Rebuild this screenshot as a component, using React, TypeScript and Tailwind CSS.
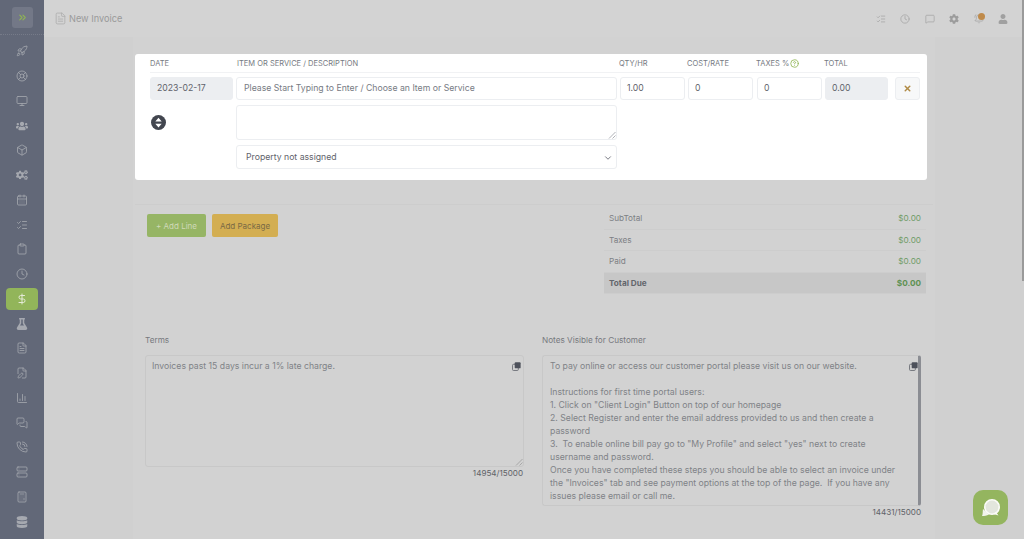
import {
  BellRing, Box, Calculator, CalendarDays, ChartColumn, ChevronDown, Clipboard, Clock, DollarSign,
  FilePen, FileText, LifeBuoy, ListChecks, MessageSquare, MessagesSquare, Monitor, PhoneCall, Rocket,
  Server, X, ChevronsRight, CircleHelp,
} from 'lucide-react'
import { FaCog, FaCogs, FaDatabase, FaFlask, FaUser, FaUsers } from 'react-icons/fa'
import type { ComponentType } from 'react'

const font = { fontFamily: 'Inter, "Liberation Sans", sans-serif' }

type IconType = ComponentType<{ className?: string; strokeWidth?: number }>

const navTop: IconType[] = [Rocket, LifeBuoy, Monitor, FaUsers, Box, FaCogs, CalendarDays, ListChecks, Clipboard, Clock]
const navBottom: IconType[] = [FaFlask, FileText, FilePen, ChartColumn, MessagesSquare, PhoneCall, Server, Calculator, FaDatabase]

const notes = `To pay online or access our customer portal please visit us on our website.

Instructions for first time portal users:
1. Click on "Client Login" Button on top of our homepage
2. Select Register and enter the email address provided to us and then create a password
3.  To enable online bill pay go to "My Profile" and select "yes" next to create username and password.
Once you have completed these steps you should be able to select an invoice under the "Invoices" tab and see payment options at the top of the page.  If you have any issues please email or call me.`

function NavIcon({ icon: Icon }: { icon: IconType }) {
  return (
    <div className="flex h-[24.75px] w-full items-center justify-center">
      <Icon className="h-[12px] w-[12px] text-[#a6a9b0]" strokeWidth={1.6} />
    </div>
  )
}

function Field({ children, className = 'bg-white' }: { children: React.ReactNode; className?: string }) {
  return (
    <div className={`flex h-[23px] items-center rounded-[3px] border border-[#eceef1] px-[6px] text-[8.7px] text-[#5f636b] ${className}`}>
      {children}
    </div>
  )
}

function TotalRow({ label, strong }: { label: string; strong?: boolean }) {
  return (
    <div className={`flex h-[21.5px] items-center justify-between border-b border-[#cdcdcd] px-[5px] text-[8.2px] ${strong ? 'bg-[#c7c7c7] font-bold text-[#63666c]' : 'text-[#7d7f84]'}`}>
      <span>{label}</span>
      <span className={strong ? 'text-[#5e9152]' : 'text-[#6f9b66]'}>$0.00</span>
    </div>
  )
}

function CopyMark() {
  return (
    <svg viewBox="0 0 10 10" className="absolute right-[3px] top-[7px] h-[9px] w-[9px]">
      <rect x="0.6" y="2.6" width="6.4" height="6.8" rx="1" fill="none" stroke="#6a6d74" strokeWidth="1" />
      <rect x="3" y="0.4" width="6.6" height="6.6" rx="1" fill="#4d515b" />
    </svg>
  )
}

function Grip({ color }: { color: string }) {
  return (
    <svg viewBox="0 0 8 8" className="absolute bottom-[1px] right-[1px] h-[8px] w-[8px]">
      <path d="M1 7.5 7.5 1M4.5 7.5 7.5 4.5" stroke={color} strokeWidth="0.8" fill="none" />
    </svg>
  )
}

export default function App() {
  return (
    <div className="relative flex h-[539px] w-[1024px] overflow-hidden bg-[#d0d0d0]" style={font}>
      {/* Sidebar */}
      <aside className="flex h-full w-[44px] shrink-0 flex-col items-center bg-[#626878]">
        <div className="flex h-[35px] w-full shrink-0 items-center justify-center border-b border-dotted border-[#767b89]">
          <div className="flex h-[21px] w-[21px] items-center justify-center rounded-[3px] bg-[#737887]">
            <ChevronsRight className="h-[11px] w-[11px] text-[#8fb552]" strokeWidth={2.4} />
          </div>
        </div>
        <div className="flex w-full flex-col pt-[4px]">
          {navTop.map((Icon, i) => (
            <NavIcon key={i} icon={Icon} />
          ))}
          <div className="flex h-[24.75px] items-center justify-center px-[6px]">
            <div className="flex h-[22px] w-full items-center justify-center rounded-[4px] bg-[#92b55a]">
              <DollarSign className="h-[12px] w-[12px] text-[#e4ead6]" strokeWidth={2} />
            </div>
          </div>
          {navBottom.map((Icon, i) => (
            <NavIcon key={i} icon={Icon} />
          ))}
        </div>
      </aside>

      <main className="flex min-w-0 flex-1 flex-col">
        {/* Top bar */}
        <header className="flex h-[37px] shrink-0 items-center justify-between bg-[#d3d3d3] pl-[10px] pr-[16px]">
          <div className="flex items-center gap-[2px]">
            <FileText className="h-[13px] w-[13px] text-[#acacac]" strokeWidth={1.5} />
            <span className="text-[9.2px] text-[#9a9a9a]">New Invoice</span>
          </div>
          <div className="flex items-center gap-[14.4px] text-[#a8a8a8]">
            <ListChecks className="h-[10px] w-[10px]" strokeWidth={2} />
            <Clock className="h-[10px] w-[10px]" strokeWidth={2} />
            <MessageSquare className="h-[10px] w-[10px]" strokeWidth={2} />
            <FaCog className="h-[10px] w-[10px] text-[#9c9c9c]" />
            <div className="relative h-[10px] w-[10px]">
              <BellRing className="h-[10px] w-[10px]" strokeWidth={2} />
              <span className="absolute right-[-1px] top-[-1px] h-[7px] w-[7px] rounded-full bg-[#bf8a4a]" />
            </div>
            <FaUser className="h-[10px] w-[10px] text-[#a0a0a0]" />
          </div>
        </header>

        {/* Content */}
        <div className="mx-[89px] flex min-h-0 flex-1 flex-col bg-[#d2d2d2] px-[2px] pt-[17px]">
          {/* Invoice line card */}
          <section className="h-[126px] w-[792px] shrink-0 rounded-[3px] bg-white pl-[15px] pr-[7px]">
            <div className="grid h-[19px] grid-cols-[87px_382px_68px_69px_68px_70px_25px] items-center border-b border-[#f1f2f4] pt-[1px] text-[7.5px] uppercase text-[#767a82]">
              <span>Date</span>
              <span>Item or Service / Description</span>
              <span>Qty/Hr</span>
              <span>Cost/Rate</span>
              <span className="flex items-center gap-[1px]">
                Taxes %
                <CircleHelp className="h-[9px] w-[9px] text-[#8fb552]" strokeWidth={2.2} />
              </span>
              <span>Total</span>
              <span />
            </div>
            <div className="grid grid-cols-[86px_384px_68px_69px_68px_70px_25px] pt-[4px]">
              <Field className="mr-[3px] bg-[#eceef1]">2023-02-17</Field>
              <Field className="mr-[3px] bg-white px-[7px] text-[#777b83]">Please Start Typing to Enter / Choose an Item or Service</Field>
              <Field className="mr-[3px] bg-white">1.00</Field>
              <Field className="mr-[4px] bg-white">0</Field>
              <Field className="mr-[3px] bg-white">0</Field>
              <Field className="mr-[7px] bg-[#eceef1]">0.00</Field>
              <div className="flex h-[23px] items-center justify-center rounded-[3px] border border-[#eceef1] bg-[#f7f8f9]">
                <X className="h-[9px] w-[9px] text-[#b08a45]" strokeWidth={4} />
              </div>
            </div>
            <div className="flex pt-[5px]">
              <div className="w-[86px] shrink-0 pl-[1px] pt-[10px]">
                <svg viewBox="0 0 16 16" className="h-[15px] w-[15px]">
                  <circle cx="8" cy="8" r="8" fill="#42464f" />
                  <path d="M8 2.8 11.4 6.8H4.6ZM8 13.2 4.6 9.2H11.4Z" fill="#fff" />
                </svg>
              </div>
              <div className="flex w-[381px] flex-col gap-[5px]">
                <div className="relative">
                  <textarea readOnly className="block h-[35px] w-full resize-none rounded-[3px] border border-[#eceef1] bg-white outline-none" />
                  <Grip color="#9a9da3" />
                </div>
                <div className="flex h-[24px] items-center justify-between rounded-[3px] border border-[#eceef1] px-[9px] pt-[1px] text-[8.7px] text-[#5f636b]">
                  <span>Property not assigned</span>
                  <ChevronDown className="mr-[-6px] h-[10px] w-[10px] text-[#6d7078]" strokeWidth={2.2} />
                </div>
              </div>
            </div>
          </section>

          {/* Buttons and totals */}
          <div className="mt-[24px] flex h-[100px] shrink-0 justify-between border-t border-[#cdcdcd] pl-[12px] pr-[7px] pt-[3px]">
            <div className="flex gap-[6px] pt-[6px]">
              <div className="flex h-[23px] w-[59px] items-center justify-center rounded-[2px] bg-[#96b565] text-[8px] text-[#cfd9b8]">+ Add Line</div>
              <div className="flex h-[23px] w-[66px] items-center justify-center rounded-[2px] bg-[#d3ae52] text-[8px] text-[#7a6a45]">Add Package</div>
            </div>
            <div className="w-[322px]">
              <TotalRow label="SubTotal" />
              <TotalRow label="Taxes" />
              <TotalRow label="Paid" />
              <TotalRow label="Total Due" strong />
            </div>
          </div>

          {/* Terms and notes */}
          <div className="mt-[30px] flex gap-[18px] pl-[10px]">
            <div className="w-[379px]">
              <label className="block text-[8.2px] text-[#77797e]">Terms</label>
              <div className="relative mt-[9px]">
                <textarea readOnly defaultValue="Invoices past 15 days incur a 1% late charge." className="block h-[112px] w-full resize-none rounded-[3px] border border-[#c8c8c8] bg-transparent px-[6px] py-[4px] text-[8.7px] leading-[13px] text-[#808287] outline-none" />
                <CopyMark />
                <Grip color="#9d9d9d" />
              </div>
              <p className="mr-[1px] text-right text-[8.1px] text-[#606268]">14954/15000</p>
            </div>
            <div className="w-[379px]">
              <label className="block text-[8.2px] text-[#77797e]">Notes Visible for Customer</label>
              <div className="relative mt-[9px]">
                <div className="h-[151px] w-full whitespace-pre-wrap rounded-[3px] border border-r-[3px] border-[#c8c8c8] border-r-[#8b8d93] py-[4px] pl-[7px] pr-[18px] text-[8.7px] leading-[13px] text-[#808287]">
                  {notes}
                </div>
                <CopyMark />
              </div>
              <p className="text-right text-[8.1px] text-[#606268]">14431/15000</p>
            </div>
          </div>
        </div>
      </main>

      {/* Chat widget */}
      <button className="absolute left-[973px] top-[490px] flex h-[35px] w-[35px] items-center justify-center rounded-[10px] bg-[#94b55f]">
        <svg viewBox="0 0 20 20" className="h-[20px] w-[20px]">
          <path d="M2 11 C1.5 14 2 16 1 18 C3.5 18 5.5 17.5 8 16.5 Z" fill="#f1f3ec" />
          <circle cx="11" cy="9" r="7.2" fill="#e3e6dd" stroke="#fbfbf8" strokeWidth="1.6" />
          <path d="M15 14 L17.5 17.5 L12 15.8 Z" fill="#fbfbf8" />
        </svg>
      </button>
      {/* Page scrollbar */}
      <div className="absolute right-0 top-0 h-[281px] w-[2px] bg-[#9a9a9a]" />
    </div>
  )
}
